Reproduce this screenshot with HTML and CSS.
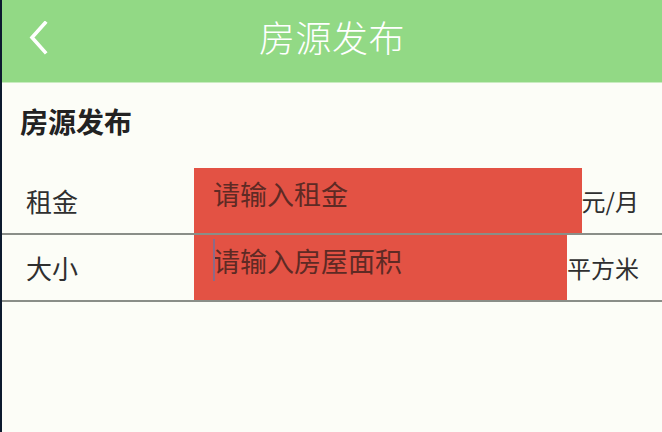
FILE: index.html
```html
<!DOCTYPE html>
<html lang="zh-CN">
<head>
<meta charset="utf-8">
<title>房源发布</title>
<link rel="stylesheet" href="styles.css">
</head>
<body>
<div class="page">
  <header class="topbar">
    <div class="back">
      <svg width="24" height="34" viewBox="0 0 24 34" aria-hidden="true">
        <path d="M17 2 L4 16.5 L17 31" fill="none" stroke="#ffffff" stroke-width="3.6" stroke-linecap="square"/>
      </svg>
    </div>
    <h1 class="title">房源发布</h1>
    <div class="spacer"></div>
  </header>
  <h2 class="section">房源发布</h2>
  <div class="form">
    <div class="row">
      <div class="label">租金</div>
      <div class="field"><span class="placeholder">请输入租金</span></div>
      <div class="unit">元/月</div>
    </div>
    <div class="row">
      <div class="label">大小</div>
      <div class="field"><span class="caret"></span><span class="placeholder">请输入房屋面积</span></div>
      <div class="unit">平方米</div>
    </div>
  </div>
</div>
</body>
</html>
```

FILE: styles.css
```css
html, body {
  margin: 0;
  padding: 0;
}
body {
  font-family: "Noto Sans CJK SC", "Noto Sans", sans-serif;
  background: #fcfdf7;
}
.page {
  height: 432px;
  border-left: 2px solid #0c1a2e;
  background: #fcfdf7;
  display: flex;
  flex-direction: column;
  overflow: hidden;
}
.topbar {
  height: 82px;
  background: #92d985;
  display: grid;
  grid-template-columns: 1fr auto 1fr;
  align-items: center;
  border-bottom: 1px solid #c9ecc0;
  flex: none;
}
.back {
  padding-left: 26px;
  display: flex;
  align-items: center;
  height: 34px;
  margin-top: -6px;
}
.back svg { display: block; }
.title {
  margin: 0;
  color: #ffffff;
  font-size: 36px;
  font-weight: 300;
  line-height: 40px;
  margin-top: -10px;
  letter-spacing: 0.5px;
}
.section {
  margin: 0;
  padding: 22px 0 0 18px;
  height: 85px;
  box-sizing: border-box;
  font-size: 28px;
  line-height: 32px;
  font-weight: 700;
  color: #222222;
  flex: none;
}
.form {
  display: flex;
  flex-direction: column;
}
.row {
  height: 65px;
  border-bottom: 2px solid #8a8e88;
  display: flex;
  align-items: stretch;
}
.label {
  width: 192px;
  flex: none;
  box-sizing: border-box;
  padding-left: 24px;
  display: flex;
  align-items: center;
  font-size: 26px;
  color: #2f2f2f;
}
.field {
  flex: 1;
  background: #e35244;
  position: relative;
  display: flex;
  align-items: center;
  padding: 0 0 13px 19px;
  box-sizing: border-box;
}
.placeholder {
  font-size: 27px;
  color: #5e2a24;
  line-height: 32px;
}
.caret {
  position: absolute;
  left: 19px;
  top: 4px;
  width: 2px;
  height: 42px;
  background: #8c6a86;
}
.unit {
  flex: none;
  padding-right: 23px;
  display: flex;
  align-items: center;
  font-size: 24px;
  color: #2f2f2f;
}
```
